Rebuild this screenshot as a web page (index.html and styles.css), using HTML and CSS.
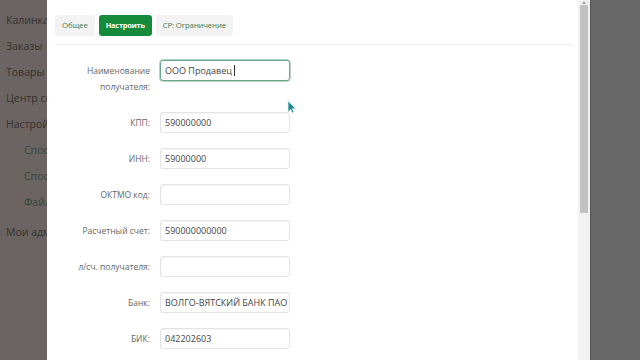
FILE: index.html
```html
<!DOCTYPE html>
<html lang="ru">
<head>
<meta charset="utf-8">
<title>Настроить</title>
<link rel="stylesheet" href="styles.css">
</head>
<body>
<div class="page">
  <nav class="sidebar">
    <div class="nav-item">Калинка.рф</div>
    <div class="nav-item">Заказы</div>
    <div class="nav-item">Товары</div>
    <div class="nav-item">Центр сообщений</div>
    <div class="nav-item">Настройки</div>
    <div class="nav-item sub active">Способы оплаты</div>
    <div class="nav-item sub">Способы доставки</div>
    <div class="nav-item sub">Файлы</div>
    <div class="nav-item last">Мои администраторы</div>
  </nav>
  <main class="modal">
    <div class="tabs">
      <div class="tab">Общее</div>
      <div class="tab active">Настроить</div>
      <div class="tab">СР: Ограничение</div>
    </div>
    <form class="form">
      <div class="row">
        <label class="label">Наименование получателя:</label>
        <div class="input focus">ООО Продавец<span class="caret"></span></div>
      </div>
      <div class="row">
        <label class="label">КПП:</label>
        <div class="input">590000000</div>
      </div>
      <div class="row">
        <label class="label">ИНН:</label>
        <div class="input">59000000</div>
      </div>
      <div class="row">
        <label class="label">ОКТМО код:</label>
        <div class="input"></div>
      </div>
      <div class="row">
        <label class="label">Расчетный счет:</label>
        <div class="input">590000000000</div>
      </div>
      <div class="row">
        <label class="label">л/сч. получателя:</label>
        <div class="input"></div>
      </div>
      <div class="row">
        <label class="label">Банк:</label>
        <div class="input">ВОЛГО-ВЯТСКИЙ БАНК ПАО</div>
      </div>
      <div class="row">
        <label class="label">БИК:</label>
        <div class="input">042202603</div>
      </div>
    </form>
  </main>
  <div class="scrollbar">
    <div class="arrow"></div>
    <div class="thumb"></div>
  </div>
  <div class="backdrop"></div>
</div>
<svg class="pointer" width="10" height="14" viewBox="0 0 10 14">
  <path d="M1 1 L1 12 L3.6 9.4 L5.4 13 L7 12.2 L5.3 8.8 L8.8 8.8 Z" fill="#1f8a94" stroke="#d8eef0" stroke-width="0.8"/>
</svg>
</body>
</html>
```
FILE: styles.css
```css
html, body {
  margin: 0;
  padding: 0;
  height: 100%;
  overflow: hidden;
  background: #676767;
  font-family: "Open Sans", "Liberation Sans", Arial, sans-serif;
}

.page {
  display: flex;
  height: 360px;
  width: 640px;
}

.sidebar {
  width: 47px;
  flex: 0 0 47px;
  background: #6b6462;
  overflow: hidden;
  white-space: nowrap;
  padding-top: 10px;
  box-sizing: border-box;
}

.nav-item {
  height: 26px;
  line-height: 20px;
  font-size: 10.5px;
  color: #36322f;
  padding-left: 6px;
}

.nav-item.sub {
  padding-left: 24px;
  color: #34443a;
}

.nav-item.last {
  margin-top: 4px;
}

.modal {
  width: 531px;
  flex: 0 0 531px;
  background: #ffffff;
  padding: 15px 5px 0 8px;
  box-sizing: border-box;
}

.tabs {
  display: flex;
  gap: 4px;
  padding-bottom: 8px;
  border-bottom: 1px solid #eeeeee;
}

.tab {
  height: 21px;
  line-height: 21px;
  padding: 0 7px;
  font-size: 7.8px;
  letter-spacing: -0.15px;
  color: #3c7a50;
  background: #f3f3f3;
  border-radius: 3px;
}

.tab.active {
  background: #168a3b;
  color: #ffffff;
  font-weight: 700;
  font-size: 7.4px;
  letter-spacing: -0.25px;
  padding: 0 7px;
}

.form {
  display: flex;
  flex-direction: column;
  gap: 15px;
  padding-top: 15px;
}

.row {
  display: flex;
  align-items: flex-start;
  gap: 10px;
}

.label {
  width: 95px;
  text-align: right;
  font-size: 8.5px;
  line-height: 16px;
  color: #666666;
  padding: 3px 0 2px;
}

.input {
  box-sizing: border-box;
  width: 130px;
  height: 21px;
  line-height: 19px;
  border: 1px solid #e3e3e3;
  border-radius: 3px;
  padding-left: 4px;
  font-size: 9px;
  color: #444444;
  white-space: nowrap;
  overflow: hidden;
  box-shadow: inset 0 1px 1px rgba(0,0,0,0.04);
}

.input.focus {
  border: 1px solid #6aa88a;
  box-shadow: 0 0 0 0.5px #6aa88a;
}

.caret {
  display: inline-block;
  width: 1px;
  height: 11px;
  background: #333333;
  margin-left: 2px;
  vertical-align: -2px;
}

.scrollbar {
  width: 12px;
  flex: 0 0 12px;
  background: #f1f1f1;
  display: flex;
  flex-direction: column;
  align-items: center;
}

.arrow {
  width: 0;
  height: 0;
  border-left: 2px solid transparent;
  border-right: 2px solid transparent;
  border-bottom: 3px solid #a3a3a3;
  margin: 1px 0 1px;
}

.thumb {
  width: 8px;
  height: 208px;
  background: #c1c1c1;
}

.backdrop {
  flex: 1;
  background: #676767;
  border-left: 1px solid #575757;
}

.pointer {
  position: absolute;
  left: 287px;
  top: 100px;
}
```
